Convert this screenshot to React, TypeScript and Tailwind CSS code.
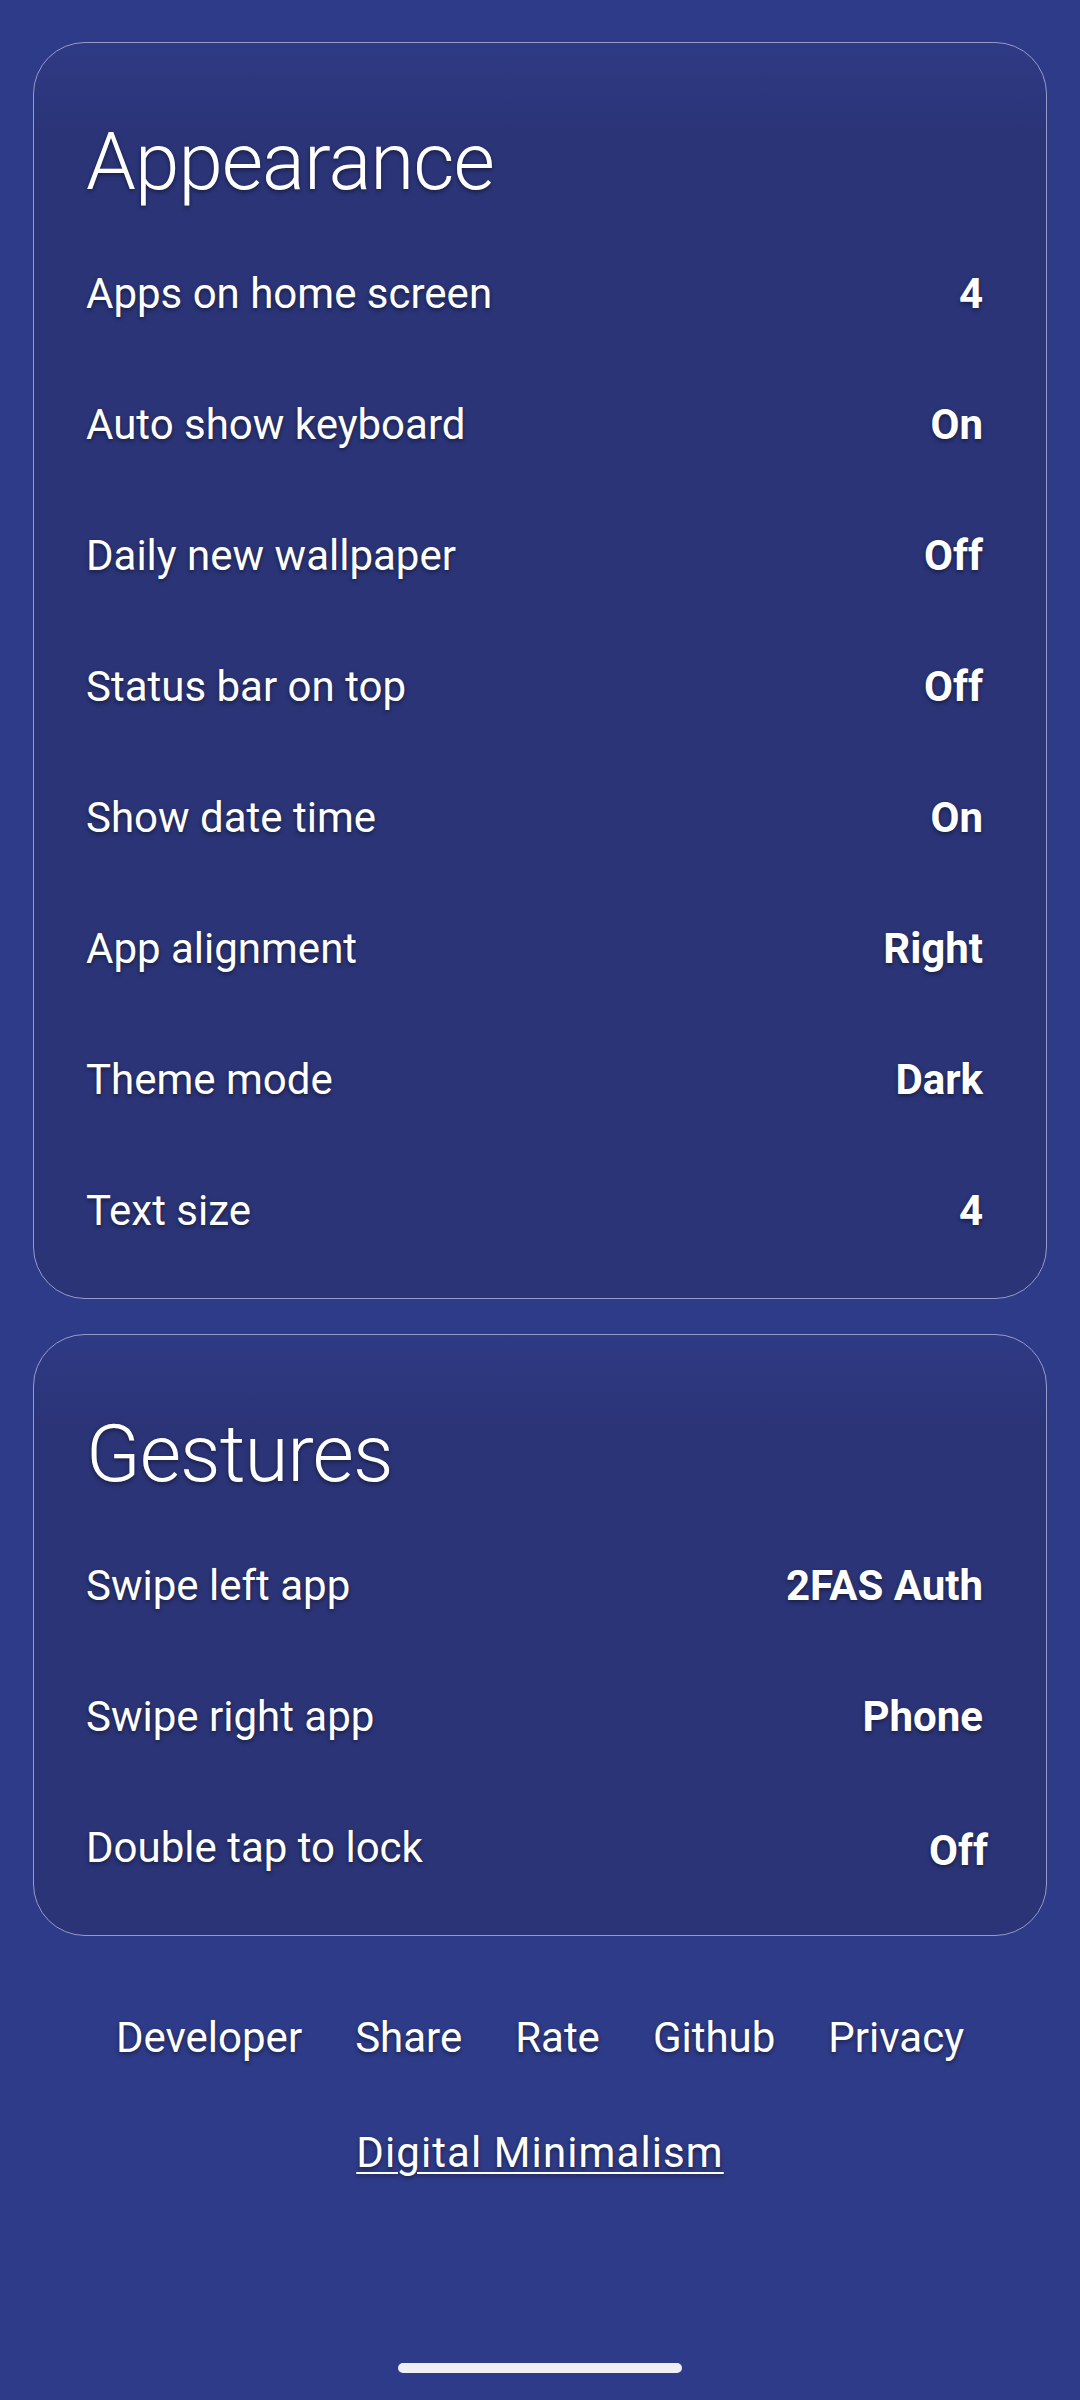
import React from "react";

const appearance = [
  { label: "Apps on home screen", value: "4" },
  { label: "Auto show keyboard", value: "On" },
  { label: "Daily new wallpaper", value: "Off" },
  { label: "Status bar on top", value: "Off" },
  { label: "Show date time", value: "On" },
  { label: "App alignment", value: "Right" },
  { label: "Theme mode", value: "Dark" },
  { label: "Text size", value: "4" },
];

const gestures = [
  { label: "Swipe left app", value: "2FAS Auth" },
  { label: "Swipe right app", value: "Phone" },
  { label: "Double tap to lock", value: "Off", nudge: true },
];

const links = ["Developer", "Share", "Rate", "Github", "Privacy"];

const shadow = "[text-shadow:0_2px_4px_rgba(0,0,0,0.45)]";

const SettingsCard = ({ title, rows }: any) => {
  return (
    <section className="mx-[33px] rounded-[52px] border-[1.5px] border-[#959bc9] bg-linear-to-b from-[#2e3a84] from-0% to-[#2b3477] to-[90px] pt-[79px] pb-[22px] pl-[52px] pr-[63px]">
      <h2 className={`text-[80px] leading-[80px] font-light tracking-[-1px] text-white ${shadow}`}>{title}</h2>
      <div className="mt-[26px] flex flex-col">
        {rows.map((row: any, index: number) => (
          <div key={index} className="flex h-[131px] items-center justify-between">
            <span className={`text-[42px] leading-[50px] text-white ${shadow}`}>{row.label}</span>
            <span
              className={`text-[42px] leading-[50px] font-bold text-white ${shadow} ${
                row.nudge ? "mt-[6px] mr-[-5px]" : ""
              }`}
            >
              {row.value}
            </span>
          </div>
        ))}
      </div>
    </section>
  );
};

export default function App() {
  return (
    <div
      className="flex min-h-[2400px] w-[1080px] flex-col bg-[#2e3b88] pt-[42px]"
      style={{ fontFamily: "Roboto, 'Noto Sans', sans-serif" }}
    >
      <SettingsCard title="Appearance" rows={appearance} />
      <div className="h-[35px]" />
      <SettingsCard title="Gestures" rows={gestures} />

      <nav className="mt-[77px] flex justify-center gap-[53px]">
        {links.map((link) => (
          <span key={link} className={`text-[42px] leading-[50px] text-white ${shadow}`}>
            {link}
          </span>
        ))}
      </nav>
      <div className="mt-[65px] flex justify-center">
        <span
          className={`text-[42px] leading-[50px] tracking-[1.1px] text-white underline decoration-2 underline-offset-[5px] ${shadow}`}
        >
          Digital Minimalism
        </span>
      </div>

      <div className="mt-auto flex justify-center pb-[27px]">
        <div className="h-[10px] w-[284px] rounded-full bg-[#eef0f6]" />
      </div>
    </div>
  );
}
